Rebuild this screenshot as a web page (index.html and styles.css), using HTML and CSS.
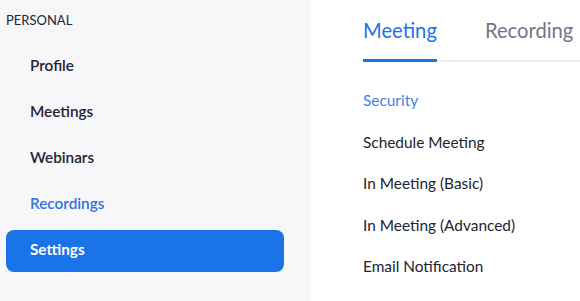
FILE: index.html
```html
<!DOCTYPE html>
<html>
<head>
<meta charset="utf-8">
<link rel="stylesheet" href="styles.css">
</head>
<body>
<div class="page">
  <aside class="sidebar">
    <div class="section-label">PERSONAL</div>
    <nav class="nav">
      <a class="nav-item">Profile</a>
      <a class="nav-item">Meetings</a>
      <a class="nav-item">Webinars</a>
      <a class="nav-item link">Recordings</a>
      <a class="nav-item active">Settings</a>
    </nav>
  </aside>
  <main class="content">
    <div class="tabs">
      <div class="tab selected">Meeting</div>
      <div class="tab">Recording</div>
    </div>
    <ul class="sections">
      <li class="section link">Security</li>
      <li class="section">Schedule Meeting</li>
      <li class="section">In Meeting (Basic)</li>
      <li class="section">In Meeting (Advanced)</li>
      <li class="section">Email Notification</li>
    </ul>
  </main>
</div>
</body>
</html>
```
FILE: styles.css
```css
html, body {
  margin: 0;
  padding: 0;
  background: #ffffff;
  font-family: Lato, "Open Sans", sans-serif;
}
.page {
  display: flex;
  width: 580px;
  height: 301px;
  overflow: hidden;
}
.sidebar {
  width: 310px;
  flex: none;
  background: #f7f7fa;
  padding: 0 26px 0 6px;
  box-sizing: border-box;
}
.section-label {
  height: 40px;
  line-height: 40px;
  font-size: 13px;
  color: #232333;
  margin-bottom: 6px;
}
.nav {
  display: flex;
  flex-direction: column;
  gap: 4px;
}
.nav-item {
  height: 42px;
  line-height: 38px;
  padding-left: 24px;
  font-size: 15.3px;
  font-weight: 600;
  color: #232333;
  border-radius: 8px;
  box-sizing: border-box;
}
.nav-item.link {
  color: #2d74e6;
}
.nav-item.active {
  background: #1a74e8;
  color: #ffffff;
  font-weight: 700;
}
.content {
  flex: 1;
  padding-left: 53px;
}
.tabs {
  display: flex;
  gap: 48px;
  height: 60px;
  border-bottom: 2px solid #f0f0f3;
}
.tab {
  position: relative;
  font-size: 20.2px;
  line-height: 60px;
  color: #747487;
  height: 60px;
}
.tab.selected {
  color: #1a74e8;
}
.tab.selected::after {
  content: "";
  position: absolute;
  left: 0;
  right: 0;
  bottom: -2px;
  height: 3px;
  background: #1a74e8;
}
.sections {
  list-style: none;
  margin: 18px 0 0 0;
  padding: 0;
}
.section {
  height: 41.5px;
  line-height: 40px;
  font-size: 15.4px;
  color: #232333;
}
.section.link {
  color: #3f82ec;
}
```
